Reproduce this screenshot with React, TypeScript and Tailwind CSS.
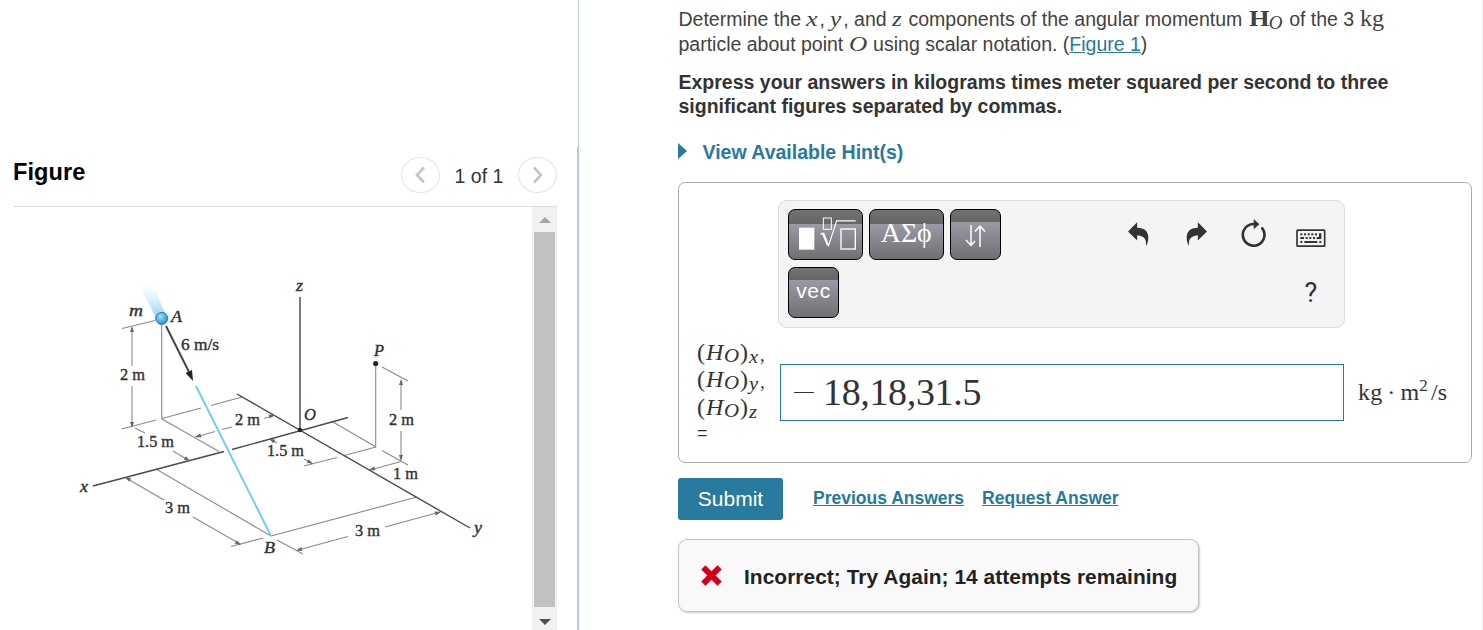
import { ReactNode } from "react";
import clsx from "clsx";

const serif = "font-['Liberation_Serif',serif]";

// thin construction lines of the diagram: [x1, y1, x2, y2]
const thinLines = [
  [161.7, 325, 161.7, 418.7],
  [122, 328.5, 155, 320.5],
  [132, 330, 132, 366],
  [132, 386, 132, 425],
  [121.7, 429, 156, 420],
  [162, 418.5, 201, 408],
  [211, 405.5, 242, 397],
  [162, 419, 219, 451.5],
  [196, 437, 215, 431.5],
  [222, 429.5, 232, 427],
  [264, 418.5, 274, 415.5],
  [135, 428, 145, 433],
  [173, 451, 188, 460],
  [126, 478, 164, 500],
  [193, 517, 240, 544],
  [231, 546.5, 263, 538],
  [156, 469, 271, 536],
  [271, 536, 417, 497],
  [277, 540, 303, 554],
  [298, 550, 348, 536.5],
  [385, 527, 440, 512],
  [375.7, 363, 375.7, 446.5],
  [382, 367, 408, 381],
  [401, 382, 401, 410],
  [401, 431, 401, 460],
  [382, 450.5, 408, 465],
  [333, 422, 376, 447],
  [376, 447, 344, 455.5],
  [337, 457.5, 304, 466],
  [370, 470, 401, 461.5],
  [270, 439, 277, 443],
  [304, 459, 312, 463.5],
];

const axes = [
  [93, 486, 224, 451.5],
  [232, 449.5, 348, 417.5],
  [237, 394, 470, 528],
];

// small arrow heads: [x, y, angle]
const heads = [
  [132, 326, -90],
  [132, 428, 90],
  [401, 379, -90],
  [401, 461, 90],
  [190, 461, 30],
  [241, 545, 30],
  [125, 477, 210],
  [313, 464, 30],
  [269, 438.5, 210],
  [275, 415, -15],
  [195, 437, 165],
  [369, 470, 165],
  [441, 512, -15],
  [296, 550.5, 165],
];

const labels = [
  { x: 129, y: 316, w: 14, text: "m", italic: true },
  { x: 171, y: 322, w: 11, text: "A", italic: true },
  { x: 296, y: 291, w: 7, text: "z", italic: true },
  { x: 374, y: 356, w: 10, text: "P", italic: true },
  { x: 304, y: 420, w: 12, text: "O", italic: true },
  { x: 80, y: 492, w: 8, text: "x", italic: true },
  { x: 474, y: 533, w: 8, text: "y", italic: true },
  { x: 264, y: 553, w: 11, text: "B", italic: true },
  { x: 181, y: 350, w: 38, text: "6 m/s" },
  { x: 120, y: 380, w: 25, text: "2 m" },
  { x: 235, y: 425, w: 25, text: "2 m" },
  { x: 389, y: 425, w: 25, text: "2 m" },
  { x: 137, y: 447, w: 37, text: "1.5 m" },
  { x: 267, y: 456, w: 37, text: "1.5 m" },
  { x: 393, y: 479, w: 25, text: "1 m" },
  { x: 165, y: 513, w: 25, text: "3 m" },
  { x: 355, y: 536, w: 25, text: "3 m" },
];

function Diagram() {
  return (
    <svg width="519" height="423" viewBox="13 207 519 423" className="block shrink-0">
      <defs>
        <linearGradient id="trail" x1="0" y1="0" x2="0" y2="1">
          <stop offset="0" stopColor="#c9eafa" stopOpacity="0" />
          <stop offset="1" stopColor="#8fd0f2" />
        </linearGradient>
        <radialGradient id="ball" cx="0.4" cy="0.35" r="0.7">
          <stop offset="0" stopColor="#a5e0fb" />
          <stop offset="0.6" stopColor="#45b2e6" />
          <stop offset="1" stopColor="#2587b8" />
        </radialGradient>
      </defs>
      <path d="M141 288 L153 284 L165 313 L156 318 Z" fill="url(#trail)" />
      {thinLines.map(([x1, y1, x2, y2], i) => (
        <line key={i} x1={x1} y1={y1} x2={x2} y2={y2} stroke="#8a8a8a" strokeWidth="1.1" />
      ))}
      <line x1="300" y1="297" x2="300" y2="430" stroke="#7c7c7c" strokeWidth="2" />
      {axes.map(([x1, y1, x2, y2], i) => (
        <line key={i} x1={x1} y1={y1} x2={x2} y2={y2} stroke="#4a4a4a" strokeWidth="1.4" />
      ))}
      {heads.map(([x, y, a], i) => (
        <path key={i} d="M0 0 L-6 -2 L-6 2 Z" fill="#666" transform={`translate(${x} ${y}) rotate(${a})`} />
      ))}
      <line x1="196" y1="386" x2="271" y2="536" stroke="#6accf7" strokeWidth="1.9" />
      <line x1="166" y1="326" x2="189" y2="372" stroke="#444" strokeWidth="1.9" />
      <path d="M193 381 L185.500 373 L192 370 Z" fill="#222" />
      <circle cx="161.700" cy="318.400" r="6" fill="url(#ball)" stroke="#2b7ba6" strokeWidth="1" />
      <circle cx="300" cy="430" r="2.300" fill="#222" />
      <circle cx="375.700" cy="363.500" r="2.600" fill="#222" />
      {labels.map((l, i) => (
        <text
          key={i}
          x={l.x}
          y={l.y}
          textLength={l.w}
          lengthAdjust="spacingAndGlyphs"
          fill="#333"
          stroke="#333"
          strokeWidth="0.4"
          className={clsx(serif, "text-[16.5px]", l.italic && "italic")}
        >
          {l.text}
        </text>
      ))}
    </svg>
  );
}

function Chevron({ flip }: { flip?: boolean }) {
  return (
    <button className="flex h-9 w-[39px] items-center justify-center rounded-[50%] border border-[#e3e3e3]">
      <svg width="12" height="18" viewBox="0 0 12 18" className={clsx(flip ? "-scale-x-100" : "mr-[2px]")}>
        <path d="M10 1.500 L3 9 L10 16.500" fill="none" stroke="#c4c4c4" strokeWidth="2.600" />
      </svg>
    </button>
  );
}

function FigurePanel() {
  return (
    <div className="flex h-full w-[579px] shrink-0 flex-col">
      <div className="h-[147px] border-r border-[#b9c9df]" />
      <div className="flex flex-1 flex-col border-r-2 border-[#b9cae2] pl-[13px]">
        <div className="flex h-[60px] w-[544px] justify-between border-b border-[#dcdcdc]">
          <h2 className="pt-[11px] text-[23.5px] leading-[28px] font-bold tracking-[0.1px] text-black">Figure</h2>
          <div className="flex pt-[10px]">
            <Chevron />
            <span className="w-[78px] pt-[7px] text-center text-[19.5px] leading-6 text-[#333]">1 of 1</span>
            <Chevron flip />
          </div>
        </div>
        <div className="flex flex-1">
          <Diagram />
          <div className="flex w-[25px] flex-col items-center bg-[#f1f1f1]">
            <div className="flex h-[25px] items-center">
              <svg width="12" height="6" viewBox="0 0 12 6">
                <path d="M0 6 L6 0 L12 6 Z" fill="#a3a3a3" />
              </svg>
            </div>
            <div className="h-[375px] w-[21px] bg-[#c1c1c1]" />
            <div className="flex h-[23px] items-center pt-[7px]">
              <svg width="12" height="6" viewBox="0 0 12 6">
                <path d="M0 0 L6 6 L12 0 Z" fill="#505050" />
              </svg>
            </div>
          </div>
        </div>
      </div>
    </div>
  );
}

function MathVar({ children, className }: { children: ReactNode; className?: string }) {
  return <span className={clsx(serif, "inline-block origin-left leading-[18px]", className)}>{children}</span>;
}

function Key({ wide, children }: { wide?: boolean; children: ReactNode }) {
  return (
    <button
      className={clsx(
        "flex h-[51px] items-center justify-center rounded-[7px] border border-black text-white",
        wide
          ? "w-[75px] bg-[linear-gradient(#727272_0%,#656565_29%,#9a99a5_29%,#707073_100%)]"
          : "w-[51px] bg-[linear-gradient(#727272_0%,#656565_25%,#9a99a5_25%,#707073_100%)]"
      )}
    >
      {children}
    </button>
  );
}

function RootIcon() {
  return (
    <svg width="57" height="34" viewBox="388 112 171 102" fill="none" stroke="white" className="ml-[3px]">
      <rect x="388" y="144" width="46" height="66" fill="white" stroke="none" />
      <rect x="461" y="115" width="24" height="34" strokeWidth="3" />
      <path d="M453 164 L461 160" strokeWidth="4" />
      <path d="M460 160 L475 197" strokeWidth="7" />
      <path d="M476 200 L501 123.500 H558" strokeWidth="3.500" />
      <rect x="514" y="148" width="43" height="60" strokeWidth="4" />
    </svg>
  );
}

function UpDownIcon() {
  return (
    <svg width="21" height="24" viewBox="0 0 21 24" fill="none" stroke="white" strokeWidth="1.500" className="mt-[3px]">
      <path d="M6 1 V21 M1 16 L6 21.500 L10 17 M15 23 V3 M10 7.500 L15 2 L20 7.500" />
    </svg>
  );
}

function UndoIcon({ flip }: { flip?: boolean }) {
  return (
    <svg width="21" height="24" viewBox="54 97 62 71" className={clsx("mb-[2px]", flip && "-scale-x-100")}>
      <path
        d="M54 125 L81 98 V114 C103 114 115 126 114 145 C114 154 111 162 107 168 C109 151 105 138 81 136 V152 Z"
        fill="#333"
      />
    </svg>
  );
}

function ResetIcon() {
  return (
    <svg width="26" height="28" viewBox="392 92 78 84" className="mb-[3px]">
      <path d="M430 107 A32.500 32.500 0 1 0 456 120" fill="none" stroke="#333" strokeWidth="8" strokeLinecap="round" />
      <path d="M430 92 L447 107.500 L430 123 Z" fill="#333" />
    </svg>
  );
}

function KeyboardIcon() {
  const dots = [570, 581, 592, 603, 614];
  return (
    <svg width="30" height="18" viewBox="557 118 90 54" fill="#333">
      <rect x="560" y="121.500" width="83" height="48" rx="2" fill="none" stroke="#333" strokeWidth="5" />
      {dots.map((x) => (
        <rect key={x} x={x} y="131" width="6" height="6" />
      ))}
      <rect x="570" y="142" width="11" height="6" />
      {[586, 597, 608].map((x) => (
        <rect key={x} x={x} y="142" width="6" height="6" />
      ))}
      <path d="M626 131 H633 V148 H619 V142 H626 Z" />
      <rect x="570" y="154" width="6" height="6" />
      <rect x="582" y="154" width="39" height="6" />
      <rect x="627" y="154" width="6" height="6" />
    </svg>
  );
}

function Toolbar() {
  return (
    <div className="flex h-[128px] w-[567px] justify-between rounded-[9px] border border-[#dcdcdc] bg-[#f4f4f4] pt-2 pr-[18px] pl-[9px]">
      <div className="flex flex-col gap-[7px]">
        <div className="flex gap-[6px]">
          <Key wide>
            <RootIcon />
          </Key>
          <Key wide>
            <span className={clsx(serif, "scale-x-105 pb-px text-[26.5px]")}>ΑΣϕ</span>
          </Key>
          <Key>
            <UpDownIcon />
          </Key>
        </div>
        <Key>
          <span className="pb-[3px] text-[21px] tracking-[0.6px]">vec</span>
        </Key>
      </div>
      <div className="flex flex-col items-end">
        <div className="flex h-[52px] items-center">
          <UndoIcon />
          <div className="ml-[37px]">
            <UndoIcon flip />
          </div>
          <div className="ml-[34px]">
            <ResetIcon />
          </div>
          <div className="mt-[6px] ml-[29px]">
            <KeyboardIcon />
          </div>
        </div>
        <div className="mt-[17px] w-[30px] text-center font-[Roboto,sans-serif] text-[27px] leading-[30px] text-[#333]">?</div>
      </div>
    </div>
  );
}

function Component({ axis, comma }: { axis: string; comma?: boolean }) {
  return (
    <div className={clsx(serif, "flex h-[27.5px] items-baseline text-[24px] leading-[27.5px] text-[#333]")}>
      <span className="w-[9px]">(</span>
      <span className="w-[18px] italic">H</span>
      <span className="relative top-[2px] w-[16px] origin-left scale-x-110 text-[19px] italic">O</span>
      <span className="w-[9px]">)</span>
      <span className="relative top-[3px] w-[10px] origin-left scale-x-115 text-[18px] italic">{axis}</span>
      {comma && <span className="relative top-[1px] pl-px text-[19px]">,</span>}
    </div>
  );
}

function AnswerBox() {
  return (
    <div className="mt-[17px] h-[281px] w-[794px] rounded-[7px] border border-[#a9a9a9] pt-[17px]">
      <div className="pl-[99px]">
        <Toolbar />
      </div>
      <div className="flex pt-[11px] pl-[18px]">
        <div className="w-[83px]">
          <Component axis="x" comma />
          <Component axis="y" comma />
          <Component axis="z" />
          <div className="text-[18px] leading-6 text-[#333]">=</div>
        </div>
        <div className={clsx(serif, "mt-[25px] flex h-[57px] w-[564px] items-center border border-[#1f7d9f] pl-[13px] text-[38px] leading-[54px] text-[#333]")}>
          <span className="mr-[9px] h-[1.5px] w-5 bg-[#333]" />
          <span className="pb-px tracking-[-0.35px]">
            18<i>,</i>18<i>,</i>31.5
          </span>
        </div>
        <div className={clsx(serif, "ml-[14px] pt-[40px] text-[24px] leading-[27px] tracking-[0.15px] whitespace-nowrap text-[#333]")}>
          kg<span className="px-[5px]">·</span>m<sup className="text-[17px] leading-none">2</sup>
          <span className="pl-[3px]">/s</span>
        </div>
      </div>
    </div>
  );
}

function Feedback() {
  return (
    <div className="mt-[19px] flex h-[73px] w-[521px] items-center rounded-[9px] border border-[#c4c4c4] bg-[#f9f9f9] pl-[22px] shadow-[1px_1px_2px_#ccc]">
      <svg width="21" height="21" viewBox="0 0 21 21">
        <path d="M4.500 4.500 L16.500 16.500 M16.500 4.500 L4.500 16.500" stroke="#d30019" strokeWidth="6" strokeLinecap="square" />
      </svg>
      <span className="pt-[2px] pl-[22px] text-[20.9px] font-bold tracking-[0.05px] whitespace-nowrap text-[#222]">
        Incorrect; Try Again; 14 attempts remaining
      </span>
    </div>
  );
}

export default function App() {
  return (
    <div className="flex h-[630px] w-[1483px] overflow-hidden bg-white font-['Liberation_Sans',Arial,sans-serif]">
      <FigurePanel />
      <main className="flex-1 border-r border-[#eee] pt-[7px] pl-[99px] text-[19.5px] text-[#333]">
        <div className="pl-[0.5px] leading-[25px] whitespace-nowrap text-[#424242]">
          <div className="h-[25px]">
            Determine the <MathVar className="w-[13px] scale-x-125 text-[21px] italic">x</MathVar>,{" "}
            <MathVar className="w-[13px] scale-x-120 text-[21px] italic">y</MathVar>, and{" "}
            <MathVar className="w-[11px] scale-x-120 text-[21px] italic">z</MathVar> components of the angular momentum{" "}
            <MathVar className="ml-px w-[20px] scale-x-110 text-[24px] font-bold">H</MathVar>
            <MathVar className="relative top-[3px] w-[15px] text-[19px] italic">O</MathVar> of the 3{" "}
            <MathVar className="w-[25px] scale-x-105 text-[23px]">kg</MathVar>
          </div>
          <div className="h-[25px]">
            particle about point <MathVar className="w-[19px] scale-x-115 text-[22px] italic">O</MathVar> using scalar
            notation. (<a className="text-[#257a9e] underline">Figure 1</a>)
          </div>
        </div>
        <p className="mt-[13px] pl-[0.5px] leading-[24.4px] font-bold whitespace-nowrap">
          Express your answers in kilograms times meter squared per second to three
          <br />
          significant figures separated by commas.
        </p>
        <div className="mt-[21px] flex h-[25px] items-center text-[#257a9e]">
          <svg width="9" height="16" viewBox="0 0 9 16" className="mb-[3px]">
            <path d="M0 0 L9 8 L0 16 Z" fill="#257a9e" />
          </svg>
          <span className="pl-[15.5px] font-bold">View Available Hint(s)</span>
        </div>
        <AnswerBox />
        <div className="mt-[15px] flex h-[42px] items-center text-[17.5px] font-bold text-[#257a9e]">
          <button className="h-[42px] w-[105px] rounded-[3px] bg-[#287a9e] text-[21px] font-normal text-white">Submit</button>
          <a className="ml-[30px] pb-[2px] underline">Previous Answers</a>
          <a className="ml-[18px] pb-[2px] underline">Request Answer</a>
        </div>
        <Feedback />
      </main>
    </div>
  );
}
